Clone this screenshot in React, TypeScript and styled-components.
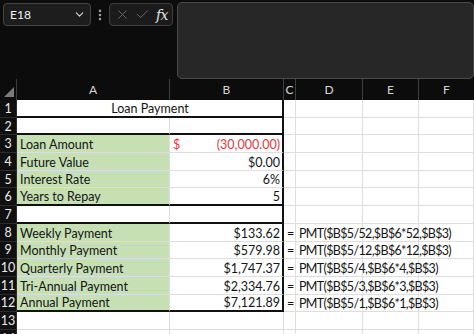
import React from 'react';
import styled, { createGlobalStyle } from 'styled-components';
import { X, Check, ChevronDown, EllipsisVertical } from 'lucide-react';

const GREEN = '#c6e0b4';
const GRID = '#dedede';
const RED = '#e8343a';
const HEAD_BG = '#0c0c0c';

type Align = 'left' | 'right' | 'center';

interface CellSpec {
  text?: string;
  prefix?: string;
  align?: Align;
  green?: boolean;
  red?: boolean;
  span?: number;
  overflow?: boolean;
}

interface RowSpec {
  cells: CellSpec[];
  thickBottom?: boolean;
}

const payments = [
  ['Weekly Payment', '$133.62', 'PMT($B$5/52,$B$6*52,$B$3)'],
  ['Monthly Payment', '$579.98', 'PMT($B$5/12,$B$6*12,$B$3)'],
  ['Quarterly Payment', '$1,747.37', 'PMT($B$5/4,$B$6*4,$B$3)'],
  ['Tri-Annual Payment', '$2,334.76', 'PMT($B$5/3,$B$6*3,$B$3)'],
  ['Annual Payment', '$7,121.89', 'PMT($B$5/1,$B$6*1,$B$3)'],
];

const inputs = [
  ['Future Value', '$0.00'],
  ['Interest Rate', '6%'],
  ['Years to Repay', '5'],
];

// columns C..F left blank
const blankTail: CellSpec[] = [{}, {}, {}, {}];

const rows: RowSpec[] = [
  { cells: [{ text: 'Loan Payment', align: 'center', span: 2 }, ...blankTail], thickBottom: true },
  { cells: [{}, {}, ...blankTail], thickBottom: true },
  {
    cells: [
      { text: 'Loan Amount', green: true },
      { text: '(30,000.00)', prefix: '$', align: 'right', red: true },
      ...blankTail,
    ],
  },
  ...inputs.map((r, i) => ({
    cells: [{ text: r[0], green: true }, { text: r[1], align: 'right' as Align }, ...blankTail],
    thickBottom: i === inputs.length - 1,
  })),
  { cells: [{}, {}, ...blankTail], thickBottom: true },
  ...payments.map((p, i) => ({
    cells: [
      { text: p[0], green: true },
      { text: p[1], align: 'right' as Align },
      { text: '=' },
      { text: p[2], overflow: true },
      {},
      {},
    ],
    thickBottom: i === payments.length - 1,
  })),
  { cells: [{}, {}, ...blankTail] },
  { cells: [{}, {}, ...blankTail] },
];

const columns = ['A', 'B', 'C', 'D', 'E', 'F'];

const App = () => {
  return (
    <Page>
      <GlobalStyle />
      <TopBar>
        <NameBox>
          <span>E18</span>
          <ChevronDown size={13} strokeWidth={2} />
        </NameBox>
        <Dots>
          <EllipsisVertical size={14} strokeWidth={2.5} />
        </Dots>
        <FxButtons>
          <X size={15} strokeWidth={1.5} />
          <Check size={15} strokeWidth={1.5} />
          <FxLabel>fx</FxLabel>
        </FxButtons>
        <FormulaInput />
      </TopBar>
      <Sheet>
        <Corner>
          <CornerTriangle />
        </Corner>
        {columns.map((c, i) => (
          <ColHeader key={c} $last={i === columns.length - 1}>{c}</ColHeader>
        ))}
        {rows.map((row, r) => {
          let col = 0;
          return (
            <React.Fragment key={r}>
              <RowHeader>{r + 1}</RowHeader>
              {row.cells.map((cell, c) => {
                const span = cell.span || 1;
                col += span;
                // col now holds the index just past this cell; B is column 2
                const inTable = col <= 2;
                return (
                  <Cell
                    key={c}
                    $span={span}
                    $align={cell.align || 'left'}
                    $green={!!cell.green}
                    $red={!!cell.red}
                    $thickBottom={!!row.thickBottom && inTable}
                    $thickRight={col === 2 && r < 12}
                    $overflow={!!cell.overflow}
                  >
                    {cell.prefix && <Prefix>{cell.prefix}</Prefix>}
                    {cell.text && <CellText $tight={!!cell.overflow}>{cell.text}</CellText>}
                  </Cell>
                );
              })}
            </React.Fragment>
          );
        })}
      </Sheet>
    </Page>
  );
};

export default App;

const GlobalStyle = createGlobalStyle`
  html, body {
    margin: 0;
    padding: 0;
    background: ${HEAD_BG};
    overflow: hidden;
  }
  body {
    font-family: 'Lato', 'Liberation Sans', sans-serif;
  }
`;

const Page = styled.div`
  width: 474px;
  height: 334px;
  overflow: hidden;
  background: ${HEAD_BG};
`;

const TopBar = styled.div`
  display: flex;
  align-items: flex-start;
  height: 79px;
  padding: 2px 0 0 3px;
  box-sizing: border-box;
`;

const NameBox = styled.div`
  display: flex;
  align-items: center;
  justify-content: space-between;
  width: 88px;
  height: 23px;
  margin-top: 1px;
  padding: 0 4px 0 6px;
  box-sizing: border-box;
  border: 1px solid #454545;
  border-radius: 4px;
  background: #1d1d1d;
  color: #f2f2f2;
  font-size: 12px;
  svg {
    color: #d8d8d8;
  }
`;

const Dots = styled.div`
  display: flex;
  align-items: center;
  justify-content: center;
  width: 18px;
  height: 25px;
  color: #9a9a9a;
`;

const FxButtons = styled.div`
  display: flex;
  align-items: center;
  justify-content: space-between;
  width: 64px;
  height: 23px;
  margin-top: 1px;
  padding: 0 4px 0 5px;
  box-sizing: border-box;
  border: 1px solid #3e3e3e;
  border-radius: 4px;
  background: #1b1b1b;
  color: #6c6c6c;
`;

const FxLabel = styled.span`
  font-family: 'DejaVu Serif', 'Liberation Serif', serif;
  font-style: italic;
  font-size: 14px;
  color: #e6e6e6;
  letter-spacing: -0.5px;
`;

const FormulaInput = styled.div`
  flex: 1;
  height: 75px;
  margin-left: 4px;
  border: 1px solid #4a4a4a;
  border-radius: 5px;
  background: #272727;
`;

const Sheet = styled.div`
  display: grid;
  grid-template-columns: 17px 153px 114px 12px 67px 56px 1fr;
  grid-template-rows: 21px repeat(14, 17.7px);
  background: #ffffff;
`;

const Corner = styled.div`
  position: relative;
  background: ${HEAD_BG};
  border-right: 1px solid #3a3a3a;
`;

const CornerTriangle = styled.div`
  position: absolute;
  right: 2px;
  bottom: 3px;
  width: 0;
  height: 0;
  border-left: 10px solid transparent;
  border-bottom: 10px solid #7a7a7a;
`;

const ColHeader = styled.div<{ $last: boolean }>`
  display: flex;
  align-items: flex-end;
  justify-content: center;
  padding-bottom: 3px;
  background: ${HEAD_BG};
  color: #d6d6d6;
  font-size: 12px;
  border-right: ${(p) => (p.$last ? 'none' : '1px solid #3f3f3f')};
  box-sizing: border-box;
`;

const RowHeader = styled.div`
  display: flex;
  align-items: center;
  justify-content: center;
  background: #101010;
  color: #ececec;
  font-size: 12.5px;
  border-bottom: 1px solid #2c2c2c;
  border-right: 1px solid #2c2c2c;
  box-sizing: border-box;
`;

const Cell = styled.div<{
  $span: number;
  $align: Align;
  $green: boolean;
  $red: boolean;
  $thickBottom: boolean;
  $thickRight: boolean;
  $overflow: boolean;
}>`
  grid-column: span ${(p) => p.$span};
  display: flex;
  align-items: flex-end;
  justify-content: ${(p) =>
    p.$align === 'right' ? 'flex-end' : p.$align === 'center' ? 'center' : 'flex-start'};
  position: relative;
  min-width: 0;
  padding: 0 2px 0 3px;
  box-sizing: border-box;
  background: ${(p) => (p.$green ? GREEN : '#ffffff')};
  color: ${(p) => (p.$red ? RED : '#141414')};
  font-size: 12.5px;
  line-height: 14px;
  white-space: nowrap;
  overflow: ${(p) => (p.$overflow ? 'visible' : 'hidden')};
  z-index: ${(p) => (p.$overflow ? 2 : 1)};
  border-right: ${(p) => (p.$thickRight ? '2px solid #111' : `1px solid ${GRID}`)};
  border-bottom: ${(p) => (p.$thickBottom ? '2px solid #111' : `1px solid ${GRID}`)};
`;

const Prefix = styled.span`
  margin-right: auto;
`;

const CellText = styled.span<{ $tight: boolean }>`
  letter-spacing: ${(p) => (p.$tight ? '-0.65px' : 'normal')};
`;
